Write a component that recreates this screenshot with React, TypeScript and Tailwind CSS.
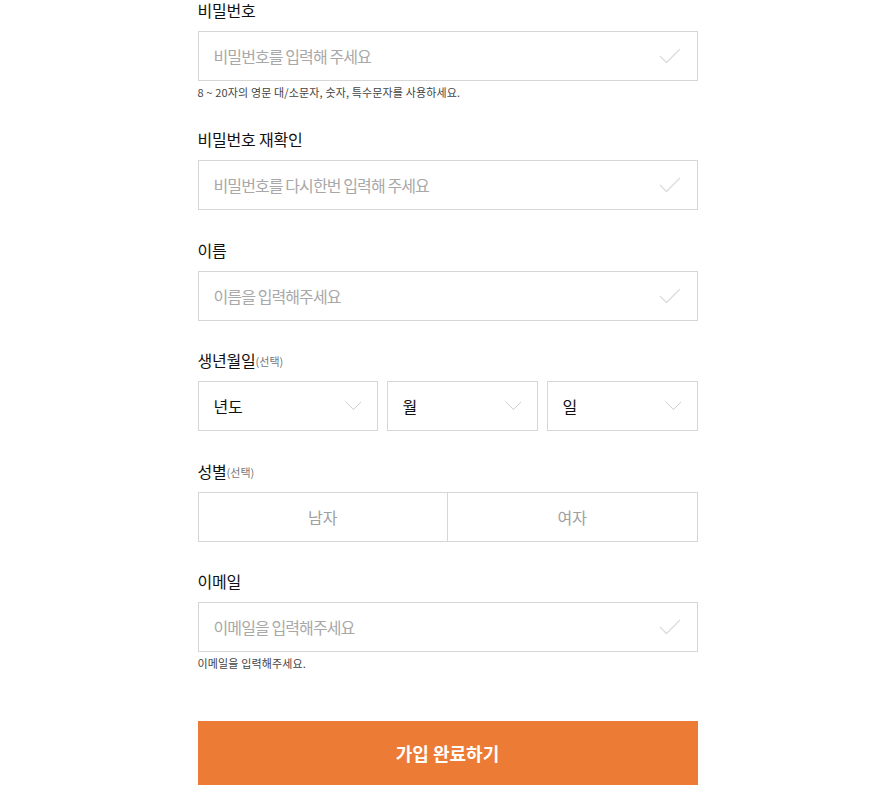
const font = { fontFamily: '"Noto Sans CJK KR", "Noto Sans", sans-serif' };

const CheckIcon = () => (
  <svg width="22" height="16" viewBox="0 0 22 16" fill="none" className="shrink-0">
    <path d="M1 8 L7.5 14.5 L21 1" stroke="#dcdcdc" strokeWidth="1.3" />
  </svg>
);

const ChevronIcon = () => (
  <svg width="17" height="10" viewBox="0 0 17 10" fill="none" className="shrink-0">
    <path d="M1 1 L8.5 8.5 L16 1" stroke="#cccccc" strokeWidth="1" />
  </svg>
);

const Label = ({ text, optional }: { text: string; optional?: boolean }) => (
  <div className="h-[20px] mb-[11px] flex items-end text-[16px] leading-[20px] text-[#111] tracking-[-0.2px]">
    {text}
    {optional && (
      <span className="text-[11px] leading-[17px] text-[#777] tracking-normal">(선택)</span>
    )}
  </div>
);

const TextField = ({ placeholder }: { placeholder: string }) => (
  <div className="h-[50px] border border-[#d6d6d6] flex items-center justify-between pl-[15px] pr-[16px]">
    <span className="text-[16px] text-[#a8a8a8] tracking-[-0.9px]">{placeholder}</span>
    <CheckIcon />
  </div>
);

const Help = ({ text }: { text: string }) => (
  <p className="mt-[2.5px] text-[11px] leading-[16px] text-[#444] tracking-[0.15px]">{text}</p>
);

const SelectBox = ({ text, className }: { text: string; className: string }) => (
  <div
    className={`${className} h-[50px] border border-[#d6d6d6] flex items-center justify-between pl-[15px] pr-[15px]`}
  >
    <span className="text-[16px] text-[#111] tracking-[-0.3px]">{text}</span>
    <ChevronIcon />
  </div>
);

export default function App() {
  return (
    <div className="min-h-screen bg-white flex justify-center pl-[16px]" style={font}>
      <form className="w-[500px] flex flex-col gap-[29.5px] pb-[7px]">
        <div>
          <Label text="비밀번호" />
          <TextField placeholder="비밀번호를 입력해 주세요" />
          <Help text="8 ~ 20자의 영문 대/소문자, 숫자, 특수문자를 사용하세요." />
        </div>

        <div>
          <Label text="비밀번호 재확인" />
          <TextField placeholder="비밀번호를 다시한번 입력해 주세요" />
        </div>

        <div>
          <Label text="이름" />
          <TextField placeholder="이름을 입력해주세요" />
        </div>

        <div>
          <Label text="생년월일" optional />
          <div className="flex gap-[9px]">
            <SelectBox text="년도" className="w-[180px]" />
            <SelectBox text="월" className="flex-1" />
            <SelectBox text="일" className="flex-1" />
          </div>
        </div>

        <div>
          <Label text="성별" optional />
          <div className="flex h-[50px] border border-[#d6d6d6]">
            <button type="button" className="flex-1 text-[16px] text-[#a0a0a0] border-r border-[#d6d6d6]">
              남자
            </button>
            <button type="button" className="flex-1 text-[16px] text-[#a0a0a0]">
              여자
            </button>
          </div>
        </div>

        <div>
          <Label text="이메일" />
          <TextField placeholder="이메일을 입력해주세요" />
          <Help text="이메일을 입력해주세요." />
        </div>

        <button
          type="button"
          className="mt-[21px] h-[64px] bg-[#ec7b35] text-white text-[18px] font-bold"
        >
          가입 완료하기
        </button>
      </form>
    </div>
  );
}
